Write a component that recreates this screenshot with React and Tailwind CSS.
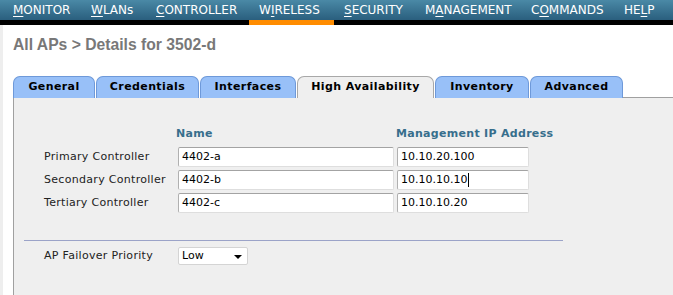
import React from "react";

const navItems = [
  { pre: "", u: "M", post: "ONITOR", w: "w-[78px]" },
  { pre: "", u: "W", post: "LANs", w: "w-[65px]" },
  { pre: "", u: "C", post: "ONTROLLER", w: "w-[103px]" },
  { pre: "W", u: "I", post: "RELESS", w: "w-[85px]" },
  { pre: "", u: "S", post: "ECURITY", w: "w-[81px]" },
  { pre: "M", u: "A", post: "NAGEMENT", w: "w-[106px]" },
  { pre: "C", u: "O", post: "MMANDS", w: "w-[93px]" },
  { pre: "HE", u: "L", post: "P", w: "w-[59px]" },
];

const tabs = [
  { label: "General", w: "w-[82px]" },
  { label: "Credentials", w: "w-[103px]" },
  { label: "Interfaces", w: "w-[96px]" },
  { label: "High Availability", w: "w-[137px]", active: true },
  { label: "Inventory", w: "w-[94px]" },
  { label: "Advanced", w: "w-[93px]" },
];

const rows = [
  { label: "Primary Controller", name: "4402-a", ip: "10.10.20.100" },
  { label: "Secondary Controller", name: "4402-b", ip: "10.10.10.10", cursor: true },
  { label: "Tertiary Controller", name: "4402-c", ip: "10.10.10.20" },
];

function Field({ value, w, cursor }) {
  return (
    <div
      className={`${w} h-[20px] bg-white border border-t-[#a3a3a3] border-l-[#b0b0b0] border-r-[#dedede] border-b-[#dedede] rounded-[2px] flex items-center pl-[3px] text-[11px] text-black`}
    >
      <span>{value}</span>
      {cursor && <span className="inline-block w-[1px] h-[14px] bg-black ml-[1px]" />}
    </div>
  );
}

export default function App() {
  return (
    <div className="w-[673px] h-[295px] overflow-hidden bg-white font-['DejaVu_Sans',Verdana,sans-serif]">
      {/* nav */}
      <div className="h-[20px] bg-linear-to-b from-[#4a89a6] to-[#2a5f7e] flex items-center pl-[3px]">
        {navItems.map((n, i) => (
          <div key={i} className={`${n.w} shrink-0 pl-[10px] text-[12px] leading-[20px] text-white whitespace-nowrap`}>
            {n.pre}
            <span className="underline underline-offset-[2px]">{n.u}</span>
            {n.post}
          </div>
        ))}
      </div>
      <div className="h-[5px] bg-black flex">
        <div className="w-[249px] shrink-0" />
        <div className="w-[85px] shrink-0 bg-[#ff8c00]" />
      </div>

      <div className="flex h-[270px]">
        <div className="w-[3px] shrink-0 bg-[#eeeeee]" />
        <div className="flex-1 pl-[10px] flex flex-col">
          <div className="mt-[11px] h-[18px] leading-[18px] text-[15.7px] font-bold text-[#787878] font-['Liberation_Sans',Arial,sans-serif]">
            All APs &gt; Details for 3502-d
          </div>

          {/* tabs */}
          <div className="mt-[22px] flex items-end h-[22px]">
            {tabs.map((t, i) => (
              <div
                key={i}
                className={`${t.w} shrink-0 h-[22px] mr-[1px] rounded-t-[7px] border border-b-0 flex items-center justify-center text-[11px] font-bold tracking-[0.4px] text-black ${
                  t.active
                    ? "bg-[#efefef] border-[#a8a8a8]"
                    : "bg-[#98c0f8] border-[#6e99d9]"
                }`}
              >
                {t.label}
              </div>
            ))}
            <div className="flex-1 h-full border-b border-[#a0a0a0] -ml-[1px]" />
          </div>

          {/* panel */}
          <div className="flex-1 bg-[#efefef] border-l border-[#a0a0a0] pt-[29px] text-[11px] text-[#222]">
            <div className="flex h-[14px] leading-[14px] font-bold text-[#376e8c] tracking-[0.3px]">
              <div className="w-[162px] shrink-0" />
              <div className="w-[220px] shrink-0">Name</div>
              <div>Management IP Address</div>
            </div>
            <div className="mt-[6px] flex flex-col gap-[3px] pl-[30px]">
              {rows.map((r, i) => (
                <div key={i} className="flex items-center">
                  <div className="w-[134px] shrink-0 tracking-[0.3px]">{r.label}</div>
                  <Field value={r.name} w="w-[216px]" />
                  <div className="w-[3px] shrink-0" />
                  <Field value={r.ip} w="w-[132px]" cursor={r.cursor} />
                </div>
              ))}
            </div>
            <div className="mt-[27px] ml-[10px] w-[539px] h-[1px] bg-[#9ba3c8]" />
            <div className="mt-[6px] pl-[30px] flex items-center">
              <div className="w-[134px] shrink-0 tracking-[0.3px]">AP Failover Priority</div>
              <div className="w-[70px] h-[18px] bg-white border border-[#d4d4d4] rounded-[2px] flex items-center justify-between pl-[3px] pr-[5px] text-black">
                <span>Low</span>
                <svg width="8" height="5" viewBox="0 0 8 5" className="mt-[3px]">
                  <polygon points="0,0 8,0 4,4" fill="#000" />
                </svg>
              </div>
            </div>
          </div>
        </div>
      </div>
    </div>
  );
}
